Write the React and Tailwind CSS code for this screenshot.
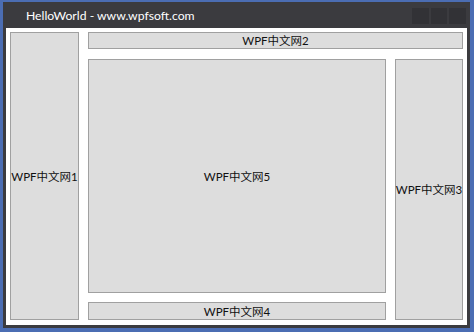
export default function App() {
  const panel =
    "flex items-center justify-center border border-[#a0a0a0] bg-[#dddddd] text-[11.5px] text-[#111111] leading-none whitespace-nowrap pt-[1px]";
  const cjk = { fontFamily: '"Lato", "Noto Sans CJK SC", sans-serif' };
  return (
    <div
      className="w-[474px] h-[332px] bg-[#4b6db3] pl-[3px] pt-[2px]"
      style={{ fontFamily: '"Lato", "Noto Sans CJK SC", sans-serif' }}
    >
      <div className="w-[467px] h-[326px] bg-[#3b3b3f] flex flex-col">
        <div className="h-[26px] flex items-center pl-[23px] pr-[4px] shrink-0">
          <span className="text-white text-[12.2px] leading-none flex-1 pt-[2px]">
            HelloWorld - www.wpfsoft.com
          </span>
          <div className="flex gap-[2px] self-start mt-[6px]">
            <div className="w-[17px] h-[16px] bg-[#323236]" />
            <div className="w-[16px] h-[16px] bg-[#323236]" />
            <div className="w-[17px] h-[16px] bg-[#323236]" />
          </div>
        </div>
        <div className="mx-[3px] mb-[3px] flex-1 bg-white p-[4px] grid grid-cols-[69px_298px_68px] grid-rows-[17px_235px_18px] gap-x-[9px] gap-y-[9px]">
          <div className={`${panel} row-span-3`} style={cjk}>WPF中文网1</div>
          <div className={`${panel} col-span-2`} style={cjk}>WPF中文网2</div>
          <div className={`${panel} mt-[1px]`} style={cjk}>WPF中文网5</div>
          <div className={`${panel} row-span-2 mt-[1px]`} style={cjk}>WPF中文网3</div>
          <div className={panel} style={cjk}>WPF中文网4</div>
        </div>
      </div>
    </div>
  );
}
